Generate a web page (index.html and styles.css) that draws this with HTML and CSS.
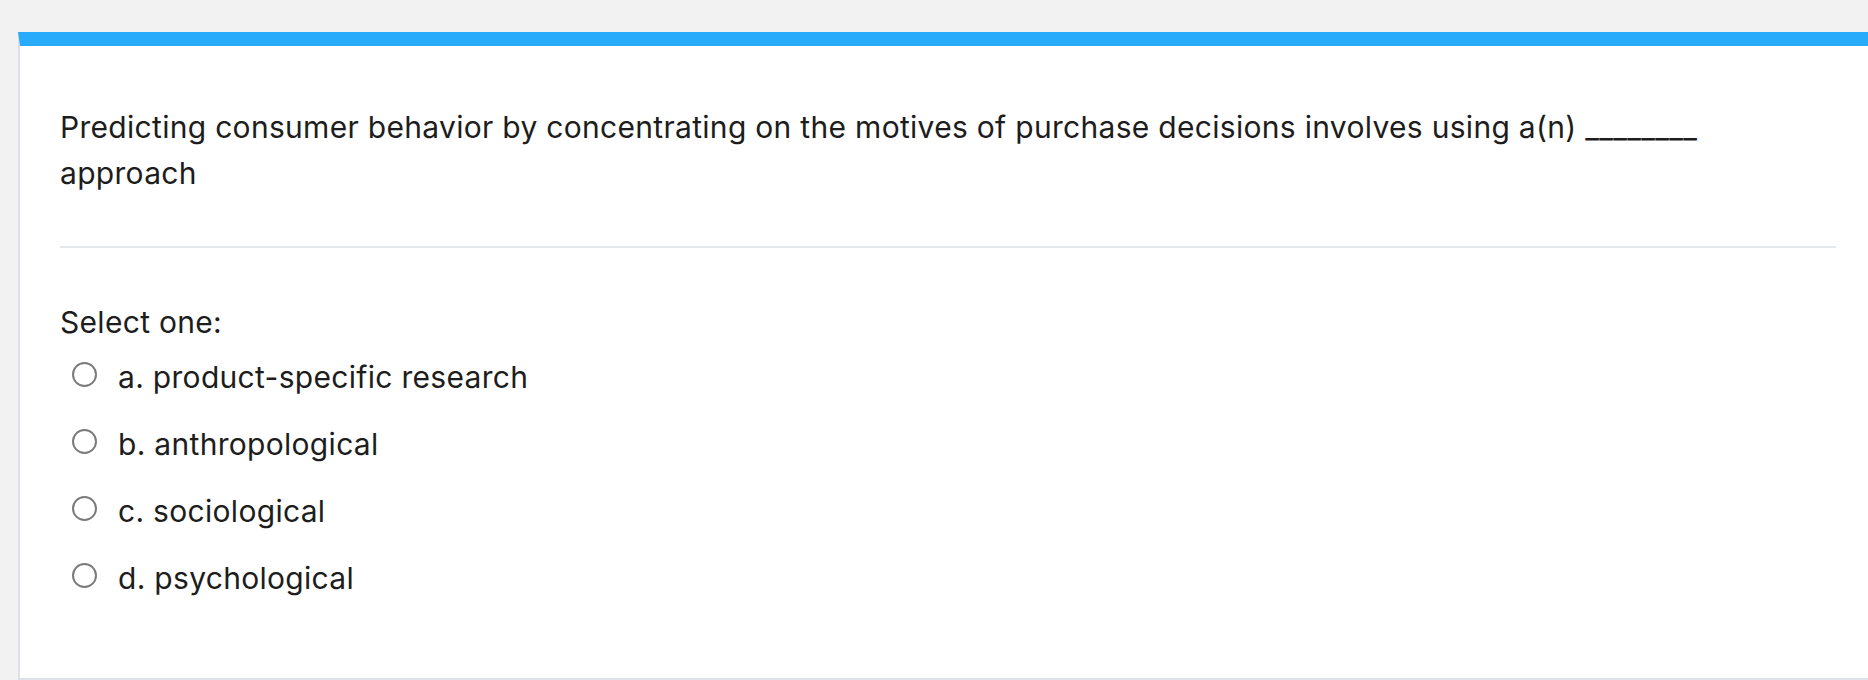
FILE: index.html
```html
<!DOCTYPE html>
<html lang="en">
<head>
<meta charset="utf-8">
<title>Question</title>
<link rel="stylesheet" href="styles.css">
</head>
<body>
<div class="card">
  <div class="qtext">Predicting consumer behavior by concentrating on the motives of purchase decisions involves using a(n) <span class="blank">________</span> approach</div>
  <hr class="sep">
  <div class="prompt">Select one:</div>
  <div class="answers">
    <label class="opt"><span class="radio"></span><span class="lbl">a. product-specific research</span></label>
    <label class="opt"><span class="radio"></span><span class="lbl">b. anthropological</span></label>
    <label class="opt"><span class="radio"></span><span class="lbl">c. sociological</span></label>
    <label class="opt"><span class="radio"></span><span class="lbl">d. psychological</span></label>
  </div>
</div>
</body>
</html>
```

FILE: styles.css
```css
html, body {
  margin: 0;
  padding: 0;
  background: #f2f2f2;
  overflow: hidden;
  height: 680px;
}
body {
  font-family: Inter, "Liberation Sans", Arial, sans-serif;
  font-size: 30px;
  line-height: 46px;
  letter-spacing: 0.3px;
  color: #1d1d1d;
}
.card {
  box-sizing: border-box;
  margin: 32px 0 0 18px;
  width: 1858px;
  height: 648px;
  background: #ffffff;
  border-top: 14px solid #28abfb;
  border-left: 2px solid #dee2e6;
  border-bottom: 2px solid #dee2e6;
  padding: 58px 40px 0 40px;
}
.qtext {
  max-width: 1740px;
}
.sep {
  border: 0;
  height: 2px;
  background: #e6e9ec;
  margin: 50px 0 0 0;
}
.prompt {
  margin-top: 51px;
}
.answers {
  display: flex;
  flex-direction: column;
  gap: 21px;
  padding-top: 9px;
}
.opt {
  display: flex;
  align-items: flex-start;
  height: 46px;
}
.radio {
  box-sizing: border-box;
  width: 25px;
  height: 25px;
  border: 2px solid #7b7b7b;
  border-radius: 50%;
  margin: 8px 21px 0 12px;
  flex: none;
}
```
